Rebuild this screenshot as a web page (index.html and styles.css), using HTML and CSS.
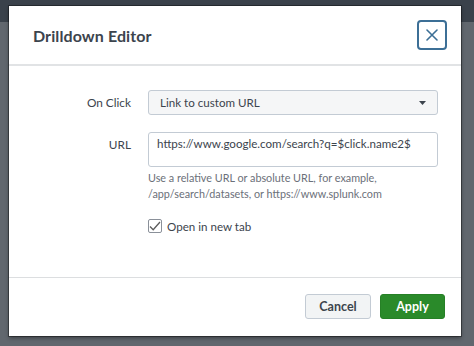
FILE: index.html
```html
<!DOCTYPE html>
<html>
<head>
<meta charset="utf-8">
<link rel="stylesheet" href="styles.css">
</head>
<body>
<div class="page">
  <div class="topbar"></div>
  <div class="backdrop"></div>
</div>
<div class="modal">
  <div class="modal-header">
    <h1 class="title">Drilldown Editor</h1>
    <button class="close" aria-label="Close">
      <svg width="12" height="12" viewBox="0 0 12 12"><path d="M1 1 L11 11 M11 1 L1 11" stroke="#3c6f96" stroke-width="1.6" fill="none" stroke-linecap="round"/></svg>
    </button>
  </div>
  <div class="modal-body">
    <div class="row">
      <div class="label">On Click</div>
      <div class="select">
        <span>Link to custom URL</span>
        <svg class="caret" width="7" height="4" viewBox="0 0 7 4"><path d="M0 0 H7 L3.5 4 Z" fill="#3c444d"/></svg>
      </div>
    </div>
    <div class="row row-url">
      <div class="label label-url">URL</div>
      <div class="url-col">
        <div class="textarea">https://www.google.com/search?q=$click.name2$</div>
        <div class="help">Use a relative URL or absolute URL, for example,<br>/app/search/datasets, or https://www.splunk.com</div>
      </div>
    </div>
    <div class="row row-check">
      <div class="label"></div>
      <label class="check">
        <span class="box"><svg width="12" height="10" viewBox="0 0 12 10"><path d="M1 5.5 L4.2 8.7 L11 1" stroke="#5c5c5c" stroke-width="1.3" fill="none"/></svg></span>
        <span>Open in new tab</span>
      </label>
    </div>
  </div>
  <div class="modal-footer">
    <button class="btn cancel">Cancel</button>
    <button class="btn apply">Apply</button>
  </div>
</div>
</body>
</html>
```
FILE: styles.css
```css
html, body {
  margin: 0;
  padding: 0;
  width: 474px;
  height: 346px;
  overflow: hidden;
  font-family: Lato, "Open Sans", sans-serif;
}
.page {
  width: 474px;
  height: 346px;
  display: flex;
  flex-direction: column;
  background: #60666d;
}
.topbar {
  height: 22px;
  background: #3a424b;
}
.backdrop {
  flex: 1;
  background: #61676e;
}
.modal {
  position: absolute;
  left: 9px;
  top: 6px;
  width: 452px;
  height: 330px;
  background: #fff;
  box-shadow: 0 0 0 1px rgba(0,0,0,0.35), 0 2px 4px rgba(0,0,0,0.4);
  display: flex;
  flex-direction: column;
  box-sizing: border-box;
}
.modal-header {
  height: 60px;
  box-sizing: border-box;
  border-bottom: 2px solid #e1e3e5;
  display: flex;
  align-items: center;
  justify-content: space-between;
  padding: 0 14px 0 24px;
}
.title {
  margin: 0;
  font-size: 16px;
  font-weight: 700;
  color: #3c444d;
  letter-spacing: 0.1px;
}
.close {
  width: 30px;
  height: 30px;
  border: 2px solid #3c6f96;
  border-radius: 4px;
  background: #fff;
  display: flex;
  align-items: center;
  justify-content: center;
  padding: 0;
}
.modal-body {
  flex: 1;
  padding: 24px 23px 0 0;
  display: flex;
  flex-direction: column;
}
.row {
  display: grid;
  grid-template-columns: 122px 1fr;
  column-gap: 17px;
  align-items: center;
}
.label {
  text-align: right;
  font-size: 11.8px;
  color: #3c444d;
}
.select {
  height: 25px;
  box-sizing: border-box;
  border: 1px solid #c3cbd4;
  border-radius: 3px;
  background: #f5f6f7;
  display: flex;
  align-items: center;
  justify-content: space-between;
  padding: 0 11px 0 11px;
  font-size: 11.6px;
  color: #3c444d;
}
.caret { margin-top: 1px; }
.row-url {
  margin-top: 17px;
  align-items: start;
}
.label-url { padding-top: 5px; }
.textarea {
  height: 35px;
  box-sizing: border-box;
  border: 1px solid #c3cbd4;
  border-radius: 3px;
  padding: 2px 8px;
  font-size: 11.6px;
  color: #3c444d;
  line-height: 17px;
  white-space: nowrap;
  overflow: hidden;
}
.help {
  margin-top: 3px;
  font-size: 10.8px;
  line-height: 16px;
  color: #6b7079;
}
.row-check {
  margin-top: 17px;
}
.check {
  display: flex;
  align-items: center;
  gap: 5px;
  font-size: 11.6px;
  color: #3c444d;
}
.box {
  width: 14px;
  height: 14px;
  box-sizing: border-box;
  border: 1px solid #8a9099;
  border-radius: 2px;
  display: flex;
  align-items: center;
  justify-content: center;
}
.modal-footer {
  height: 59px;
  box-sizing: border-box;
  border-top: 1px solid #dcdee0;
  display: flex;
  justify-content: flex-end;
  align-items: flex-start;
  gap: 9px;
  padding: 16px 16px 0 0;
}
.btn {
  width: 66px;
  height: 25px;
  box-sizing: border-box;
  border-radius: 3px;
  font-family: Lato, "Open Sans", sans-serif;
  font-size: 12.5px;
  font-weight: 700;
  padding: 0;
}
.cancel {
  background: #f2f4f5;
  border: 1px solid #c3cbd4;
  color: #3c444d;
}
.apply {
  width: 65px;
  background: #2a8a2a;
  border: 1px solid #268026;
  color: #fff;
}
```
